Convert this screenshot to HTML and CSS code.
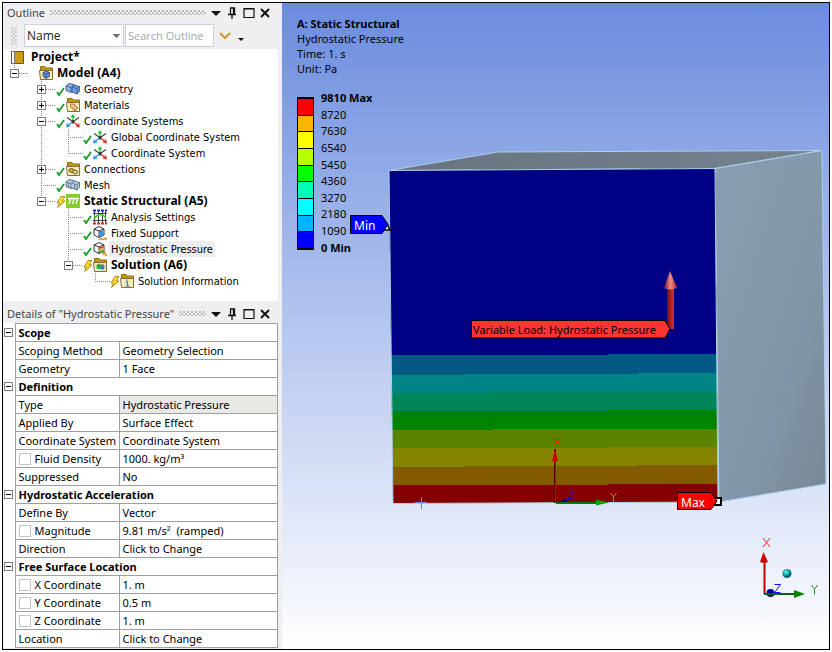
FILE: index.html
```html
<!DOCTYPE html>
<html lang="en">
<head>
<meta charset="utf-8">
<title>Static Structural - Hydrostatic Pressure</title>
<link rel="stylesheet" href="styles.css">
</head>
<body>
<svg class="sprite" aria-hidden="true">
  <symbol id="caret" viewBox="0 0 10 10"><path d="M0 3h10L5 8z" fill="#111"/></symbol>
  <symbol id="pin" viewBox="0 0 10 12"><path d="M3 1h4.500v6M3.500 1v6M1 7.500h8M5 8v4M6.500 1v6" stroke="#111" stroke-width="1.300" fill="none"/></symbol>
  <symbol id="max" viewBox="0 0 12 12"><path d="M1 1.500h10v9H1zM1 2h10" stroke="#111" stroke-width="1.200" fill="none"/></symbol>
  <symbol id="close" viewBox="0 0 10 10"><path d="M1 1l8 8M9 1l-8 8" stroke="#111" stroke-width="2" fill="none"/></symbol>
  <symbol id="check" viewBox="0 0 9 16"><path d="M1 11l2 3 5-7" stroke="#0a9a1a" stroke-width="1.700" fill="none"/></symbol>
  <symbol id="bolt" viewBox="0 0 9 16"><path d="M5 3.500h4L6 8h3L1.500 14.500 3.500 10H1z" fill="#ffdc28" stroke="#9a7400" stroke-width=".8"/></symbol>
  <symbol id="project" viewBox="0 0 16 16"><path d="M4.500 2.500h9v12h-9z" fill="#cc9c10" stroke="#6b5410"/><path d="M1.500 2.500h3v12h-3z" fill="#fff" stroke="#777"/><path d="M1.500 2v13" stroke="#444" stroke-dasharray="1 1"/></symbol>
  <symbol id="folder" viewBox="0 0 16 16"><path d="M2.500 5V1.500H7l1 1.500h6.500v3z" fill="#c79a16" stroke="#8a6a10"/><path d="M1.500 5.500h13v9h-12z" fill="#faeeb4" stroke="#806c38"/></symbol>
  <symbol id="model" viewBox="0 0 16 16"><use href="#folder"/><path d="M5 7.500L8 6l3.500 1.500v4L8 13.500 5 11.500z" fill="#5c91d8" stroke="#2d4770" stroke-width=".8"/><path d="M5 7.500l3 1.500 3.500-1.500M8 9v4" stroke="#2d4770" stroke-width=".7" fill="none"/></symbol>
  <symbol id="geometry" viewBox="0 0 16 16"><path d="M1 5l3-2.500 5 1V9l-3 2.500-5-2z" fill="#8fb4e8" stroke="#2c4c80" stroke-width=".8"/><path d="M1 5l5 1.500 3-3M6 6.500v5" stroke="#2c4c80" stroke-width=".7" fill="none"/><path d="M7 6l2.500-2 5 1.500v5L12 13l-5-2z" fill="#6c9fe4" stroke="#2c4c80" stroke-width=".8"/><path d="M7 6l5 1.500 2.500-2M12 7.500V13" stroke="#2c4c80" stroke-width=".7" fill="none"/></symbol>
  <symbol id="mesh" viewBox="0 0 16 16"><path d="M1 5l3-2.500 4 1 1.500.500 5 1.500v5L12 13l-5-2-1 .5-5-2z" fill="#b4cbe4" stroke="#42566e" stroke-width=".8"/><path d="M1 5l5 1.500 3-2.500M6 6.500v5M7 6l5 2 2.500-2.500M12 8v5M3.500 6v4M9.500 7v5" stroke="#42566e" stroke-width=".6" fill="none"/></symbol>
  <symbol id="materials" viewBox="0 0 16 16"><use href="#folder"/><path d="M5.500 7h3.500l4 4-3 3-4.500-4z" fill="#edb77e" stroke="#8f6032" stroke-width=".8"/><circle cx="7" cy="8.500" r=".7" fill="#fff"/></symbol>
  <symbol id="axes" viewBox="0 0 16 16"><path d="M2 4.500l5 3.500M14 4.500L9 8M8 7v4" stroke="#444" stroke-width="1.200"/><path d="M8 1l2.500 3.500h-5z" fill="#1fc52e"/><path d="M8 4v3.500" stroke="#1fc52e" stroke-width="1.300"/><path d="M1 14.500l1-4.500 3.500 3.500z" fill="#3292ec"/><path d="M15 14.500L14 10l-3.500 3.500z" fill="#e23030"/><path d="M3.500 12.500L7 9" stroke="#3292ec" stroke-width="1.300"/><path d="M12.500 12.500L9 9" stroke="#e23030" stroke-width="1.300"/><circle cx="8" cy="8.500" r="1.200" fill="#222"/></symbol>
  <symbol id="connections" viewBox="0 0 16 16"><use href="#folder"/><ellipse cx="6.500" cy="9.500" rx="2.500" ry="2" fill="#c8a93a" stroke="#705c20"/><ellipse cx="10" cy="11" rx="2.500" ry="2" fill="#e3cf80" stroke="#705c20"/></symbol>
  <symbol id="structural" viewBox="0 0 16 16"><path d="M1 1h14v14H1z" fill="#86cc2c"/><path d="M3 5.500h10.500M5.500 6L4 11M9 6l-1.500 5M12.500 6L11 11" stroke="#fff" stroke-width="1.300"/></symbol>
  <symbol id="settings" viewBox="0 0 16 16"><path d="M2.500 2v12M6.500 2v12M10.500 2v12M13.500 2v12M1 4.500h14M1 11.500h14" stroke="#333" stroke-width=".9"/><path d="M1 1.500h14" stroke="#2020ff" stroke-width="2" stroke-dasharray="3 1"/><path d="M1 14.500h14" stroke="#f02020" stroke-width="2" stroke-dasharray="3 1"/><path d="M2 10c3-5 8-6 12-1" stroke="#20d820" stroke-width="1.300" fill="none"/></symbol>
  <symbol id="cube" viewBox="0 0 16 16"><path d="M2 4l5-2.500L12 4v6l-5 2.500L2 10z" fill="#fff" stroke="#333"/><path d="M2 4l5 2 5-2M7 6v6.500" stroke="#333" fill="none"/></symbol>
  <symbol id="support" viewBox="0 0 16 16"><use href="#cube"/><path d="M7.500 6.300L11.500 5v5l-4 2z" fill="#2b92e8"/><path d="M7 15l3-2M10 15l3-2M13 15l2-2" stroke="#c58a10" stroke-width="1.300"/></symbol>
  <symbol id="pressure" viewBox="0 0 16 16"><use href="#cube"/><path d="M7.500 6.300l4-1.300v2l-4 1.300z" fill="#e34020"/><path d="M7.500 8.300l4-1.300v1.500l-4 1.500z" fill="#f0dd20"/><path d="M7.500 10l4-1.500V10l-4 2z" fill="#20b540"/><path d="M15 15l-4-4M11 13.500V11h2.500" stroke="#c58a10" stroke-width="1.400" fill="none"/></symbol>
  <symbol id="solution" viewBox="0 0 16 16"><use href="#folder"/><path d="M4.500 8L7 6.500 9 8v3l-2 1.500L4.500 11z" fill="#27a84a"/><path d="M8 8.500L10.500 7 12.500 8.500v3L10.500 13 8 11.500z" fill="#2a84c4"/><path d="M8 8.500L10.500 7l2 1.500-2 1z" fill="#e4622b"/></symbol>
  <symbol id="info" viewBox="0 0 16 16"><use href="#folder"/><path d="M8 6.500V8M6.500 9h2v4M6.500 13h4" stroke="#2b7be0" stroke-width="1.200" fill="none"/></symbol>
</svg>

<main class="window">
  <aside class="side">
    <section class="outline">
      <header class="title-bar">
        <h2>Outline</h2><span class="grip-line"></span>
        <button aria-label="Menu"><svg class="g10"><use href="#caret"/></svg></button>
        <button aria-label="Pin"><svg class="g12"><use href="#pin"/></svg></button>
        <button aria-label="Maximize"><svg class="g12"><use href="#max"/></svg></button>
        <button aria-label="Close"><svg class="g10"><use href="#close"/></svg></button>
      </header>
      <div class="toolbar">
        <span class="grip-block"></span>
        <select aria-label="Filter by"><option>Name</option></select>
        <input type="text" aria-label="Search Outline" placeholder="Search Outline">
        <button class="chev" aria-label="Expand"><svg viewBox="0 0 12 8"><path d="M1 1l5 5 5-5" fill="none" stroke="#cc9c2a" stroke-width="2"/></svg></button>
        <button class="more" aria-label="More"><svg viewBox="0 0 6 4"><path d="M0 0h6L3 3z" fill="#111"/></svg></button>
      </div>
      <div class="tree">
        <div class="project"><svg class="icon"><use href="#project"/></svg><b>Project*</b></div>
        <ul>
          <li><div class="row"><button class="box" aria-label="Collapse"></button><i class="dots"></i><i class="status"></i><svg class="icon"><use href="#model"/></svg><b class="label">Model (A4)</b></div>
            <ul>
              <li><div class="row"><button class="box plus" aria-label="Expand"></button><i class="dots"></i><svg class="status"><use href="#check"/></svg><svg class="icon"><use href="#geometry"/></svg><span class="label">Geometry</span></div></li>
              <li><div class="row"><button class="box plus" aria-label="Expand"></button><i class="dots"></i><svg class="status"><use href="#check"/></svg><svg class="icon"><use href="#materials"/></svg><span class="label">Materials</span></div></li>
              <li><div class="row"><button class="box" aria-label="Collapse"></button><i class="dots"></i><svg class="status"><use href="#check"/></svg><svg class="icon"><use href="#axes"/></svg><span class="label">Coordinate Systems</span></div>
                <ul>
                  <li><div class="row"><i class="dots leaf"></i><svg class="status"><use href="#check"/></svg><svg class="icon"><use href="#axes"/></svg><span class="label">Global Coordinate System</span></div></li>
                  <li><div class="row"><i class="dots leaf"></i><svg class="status"><use href="#check"/></svg><svg class="icon"><use href="#axes"/></svg><span class="label">Coordinate System</span></div></li>
                </ul>
              </li>
              <li><div class="row"><button class="box plus" aria-label="Expand"></button><i class="dots"></i><svg class="status"><use href="#check"/></svg><svg class="icon"><use href="#connections"/></svg><span class="label">Connections</span></div></li>
              <li><div class="row"><i class="dots leaf"></i><svg class="status"><use href="#check"/></svg><svg class="icon"><use href="#mesh"/></svg><span class="label">Mesh</span></div></li>
              <li><div class="row"><button class="box" aria-label="Collapse"></button><i class="dots"></i><svg class="status"><use href="#bolt"/></svg><svg class="icon"><use href="#structural"/></svg><b class="label">Static Structural (A5)</b></div>
                <ul>
                  <li><div class="row"><i class="dots leaf"></i><svg class="status"><use href="#check"/></svg><svg class="icon"><use href="#settings"/></svg><span class="label">Analysis Settings</span></div></li>
                  <li><div class="row"><i class="dots leaf"></i><svg class="status"><use href="#check"/></svg><svg class="icon"><use href="#support"/></svg><span class="label">Fixed Support</span></div></li>
                  <li><div class="row"><i class="dots leaf"></i><svg class="status"><use href="#check"/></svg><svg class="icon"><use href="#pressure"/></svg><span class="label selected">Hydrostatic Pressure</span></div></li>
                  <li><div class="row"><button class="box" aria-label="Collapse"></button><i class="dots"></i><svg class="status"><use href="#bolt"/></svg><svg class="icon"><use href="#solution"/></svg><b class="label">Solution (A6)</b></div>
                    <ul>
                      <li><div class="row"><i class="dots leaf"></i><svg class="status"><use href="#bolt"/></svg><svg class="icon"><use href="#info"/></svg><span class="label">Solution Information</span></div></li>
                    </ul>
                  </li>
                </ul>
              </li>
            </ul>
          </li>
        </ul>
      </div>
    </section>

    <section class="details">
      <header class="title-bar">
        <h2>Details of "Hydrostatic Pressure"</h2><span class="grip-line"></span>
        <button aria-label="Menu"><svg class="g10"><use href="#caret"/></svg></button>
        <button aria-label="Pin"><svg class="g12"><use href="#pin"/></svg></button>
        <button aria-label="Maximize"><svg class="g12"><use href="#max"/></svg></button>
        <button aria-label="Close"><svg class="g10"><use href="#close"/></svg></button>
      </header>
      <table>
        <colgroup><col class="c-box"><col class="c-name"><col></colgroup>
        <tbody>
          <tr><td><button class="box" aria-label="Collapse"></button></td><th colspan="2">Scope</th></tr>
          <tr><td></td><td>Scoping Method</td><td>Geometry Selection</td></tr>
          <tr><td></td><td>Geometry</td><td>1 Face</td></tr>
          <tr><td><button class="box" aria-label="Collapse"></button></td><th colspan="2">Definition</th></tr>
          <tr><td></td><td>Type</td><td class="readonly">Hydrostatic Pressure</td></tr>
          <tr><td></td><td>Applied By</td><td>Surface Effect</td></tr>
          <tr><td></td><td>Coordinate System</td><td>Coordinate System</td></tr>
          <tr><td></td><td><label><input type="checkbox">Fluid Density</label></td><td>1000. kg/m³</td></tr>
          <tr><td></td><td>Suppressed</td><td>No</td></tr>
          <tr><td><button class="box" aria-label="Collapse"></button></td><th colspan="2">Hydrostatic Acceleration</th></tr>
          <tr><td></td><td>Define By</td><td>Vector</td></tr>
          <tr><td></td><td><label><input type="checkbox">Magnitude</label></td><td>9.81 m/s²&nbsp; (ramped)</td></tr>
          <tr><td></td><td>Direction</td><td>Click to Change</td></tr>
          <tr><td><button class="box" aria-label="Collapse"></button></td><th colspan="2">Free Surface Location</th></tr>
          <tr><td></td><td><label><input type="checkbox">X Coordinate</label></td><td>1. m</td></tr>
          <tr><td></td><td><label><input type="checkbox">Y Coordinate</label></td><td>0.5 m</td></tr>
          <tr><td></td><td><label><input type="checkbox">Z Coordinate</label></td><td>1. m</td></tr>
          <tr><td></td><td>Location</td><td>Click to Change</td></tr>
        </tbody>
      </table>
    </section>
  </aside>

  <section class="viewer">
    <svg class="scene" viewBox="282 3 547 646" preserveAspectRatio="xMinYMin meet">
      <defs>
        <linearGradient id="sideFill" x1="0" y1="0" x2="1" y2="1"><stop offset="0" stop-color="#8a9db2"/><stop offset=".6" stop-color="#8397a9"/><stop offset="1" stop-color="#778894"/></linearGradient>
        <linearGradient id="topFill" x1="0" x2="1"><stop offset="0" stop-color="#67747f"/><stop offset="1" stop-color="#74838f"/></linearGradient>
        <linearGradient id="shaft" x1="0" x2="1"><stop offset="0" stop-color="#6d0c0c"/><stop offset=".5" stop-color="#b02020"/><stop offset="1" stop-color="#e03030"/></linearGradient>
        <linearGradient id="cone" x1="0" x2="1"><stop offset="0" stop-color="#8c1010"/><stop offset=".5" stop-color="#e88c8c"/><stop offset="1" stop-color="#c42020"/></linearGradient>
        <radialGradient id="ball" cx=".4" cy=".35"><stop offset="0" stop-color="#70f0f0"/><stop offset=".6" stop-color="#12a8b0"/><stop offset="1" stop-color="#086068"/></radialGradient>
        <clipPath id="front"><path d="M389 170.500L715 168.500 718 502 393 503.500z"/></clipPath>
      </defs>
      <path d="M389 170.500L498 152l324-1.500L715 168.500z" fill="url(#topFill)" stroke="#acd0ea"/>
      <path d="M715 168.500l107-18L826 484l-107 18z" fill="url(#sideFill)" stroke="#acd0ea"/>
      <g clip-path="url(#front)" shape-rendering="crispEdges">
        <path d="M380 160h345v350H380z" fill="#840000"/>
        <path d="M380 160h345V484L380 485.500z" fill="#845a00"/>
        <path d="M380 160h345V465L380 467z" fill="#848400"/>
        <path d="M380 160h345V447L380 448.500z" fill="#5a8400"/>
        <path d="M380 160h345V428.500L380 430z" fill="#008400"/>
        <path d="M380 160h345V410L380 411.500z" fill="#00845a"/>
        <path d="M380 160h345V391.500L380 393z" fill="#008484"/>
        <path d="M380 160h345V373L380 375z" fill="#005a84"/>
        <path d="M380 160h345V354L380 355.500z" fill="#000084"/>
      </g>
      <path d="M389 170.500L715 168.500 718 502 393 503.500z" fill="none" stroke="#acd0ea"/>
      <path d="M415 502.500h12M421.500 497v12" stroke="#6d86dc"/>
      <path d="M667 288h7v41h-7z" fill="url(#shaft)"/>
      <path d="M670 271l7 17q-7 3-13 0z" fill="url(#cone)"/>
      <path d="M471.500 320.500H665l5 8.500-5 9H471.500z" fill="#ff3434" stroke="#000"/>
      <text x="473" y="334">Variable Load: Hydrostatic Pressure</text>
      <path d="M386 222l4 8h-6" fill="#fff" stroke="#000" stroke-width="1.500"/>
      <path d="M350.500 215.500H382l6 9-6 9h-31.500z" fill="#0000ff" stroke="#000"/>
      <text class="light" x="354" y="230">Min</text>
      <path d="M555 503v-54" stroke="#5a0000" stroke-width="2"/><path d="M555.500 503v-42" stroke="#d00000"/>
      <path d="M555 449l3 12h-6z" fill="#d00000"/>
      <path d="M556 503h42" stroke="#087808" stroke-width="2"/><path d="M596 499.500l13 3-13 3z" fill="#08a008"/>
      <path d="M558 502l9-4v4z" fill="#000080"/>
      <path d="M554.500 437l6 8M560.500 437l-6 8" stroke="#ff1010"/>
      <path d="M568 491.500h5l-5 7.500h5" stroke="#0000ff" fill="none"/>
      <path d="M610.500 493l3 4 3-4M613.500 497v5" stroke="#10e010" fill="none"/>
      <path d="M715 498h6v7h-6z" fill="#fff" stroke="#000" stroke-width="2"/>
      <path d="M677.500 492.500H711l6 8.500-6 8.500h-33.500z" fill="#ff0000" stroke="#000"/>
      <text class="light" x="681" y="507">Max</text>
      <circle cx="770.500" cy="593" r="4" fill="#000090"/>
      <path d="M764.500 594v-34" stroke="#c00000" stroke-width="2"/><path d="M763.500 552l4.500 10q-4 2-8 0z" fill="#c80c0c"/>
      <path d="M764 594h32" stroke="#086008" stroke-width="2"/><path d="M794 590l11 4-11 4z" fill="#088008"/>
      <path d="M763 538l7 9M770 538l-7 9" stroke="#ee2020"/>
      <path d="M774.500 584.500h6l-6 8h6" stroke="#1010ff" fill="none"/>
      <path d="M811.500 585l3 4.500 3-4.500M814.500 589.500v5" stroke="#10a010" fill="none"/>
      <circle cx="787" cy="573.500" r="4.500" fill="url(#ball)"/>
    </svg>
    <div class="caption">
      <h1>A: Static Structural</h1>
      <p>Hydrostatic Pressure</p>
      <p>Time: 1. s</p>
      <p>Unit: Pa</p>
    </div>
    <div class="legend">
      <div class="bar"><i class="b1"></i><i class="b2"></i><i class="b3"></i><i class="b4"></i><i class="b5"></i><i class="b6"></i><i class="b7"></i><i class="b8"></i><i class="b9"></i></div>
      <ol><li><b>9810 Max</b></li><li>8720</li><li>7630</li><li>6540</li><li>5450</li><li>4360</li><li>3270</li><li>2180</li><li>1090</li><li><b>0 Min</b></li></ol>
    </div>
  </section>
</main>
</body>
</html>
```
FILE: styles.css
```css
* { box-sizing: border-box; }
body { margin: 0; padding: 2px; background: #fff; color: #000; font: 11px/16px "Noto Sans", "Open Sans", sans-serif; }
h1, h2, p, ul, ol { margin: 0; padding: 0; list-style: none; }
button { padding: 0; border: 0; background: none; font: inherit; color: inherit; }
svg { display: block; flex: none; }
.sprite { position: absolute; width: 0; height: 0; }

.window { display: grid; grid-template-columns: 279px 1fr; min-height: calc(100vh - 4px); border: 1px solid #000; }
.side { display: flex; flex-direction: column; padding: 0 4px 1px 0; background: #efeff2; }
.outline { flex: 1; display: flex; flex-direction: column; }

.title-bar { display: flex; align-items: center; gap: 5px; height: 19px; padding: 0 8px 0 4px; color: #444; }
.title-bar h2 { font: 11px/18px "Noto Sans", sans-serif; white-space: nowrap; }
.grip-line { flex: 1; height: 5px; background: radial-gradient(circle at 1px 1px, #bbb 0 1px, transparent 1px) 0 0 / 4px 4px, radial-gradient(circle at 1px 1px, #bbb 0 1px, transparent 1px) 2px 2px / 4px 4px; }
.g10 { width: 10px; height: 10px; }
.g12 { width: 12px; height: 12px; }

.toolbar { display: flex; align-items: center; gap: 1px; height: 27px; padding: 0 8px 0 8px; }
.grip-block { width: 6px; height: 18px; margin-right: 6px; background: radial-gradient(circle at 1px 1px, #ccc 0 1px, transparent 1px) 0 0 / 4px 4px, radial-gradient(circle at 1px 1px, #ccc 0 1px, transparent 1px) 2px 2px / 4px 4px; }
select, input[type="text"] { height: 23px; margin: 0; border: 1px solid #cfd0dc; border-radius: 0; font: 12px/18px "Open Sans", sans-serif; }
select { width: 100px; padding: 0 2px; appearance: none; background: linear-gradient(to bottom right, #717171 50%, transparent 50%) 92px 9px / 4px 4px no-repeat, linear-gradient(to bottom left, #717171 50%, transparent 50%) 88px 9px / 4px 4px no-repeat, #fff; color: #222; }
input[type="text"] { width: 89px; padding: 0 2px; background: #fff; font-size: 11px; }
input::placeholder { color: #a0a8a8; opacity: 1; }
.chev { width: 12px; margin-left: 4px; }
.more { width: 6px; margin: 9px 0 0 6px; }

.tree { flex: 1; padding: 0 0 8px 7px; background: #fff; font-family: "DejaVu Sans Condensed", "DejaVu Sans", sans-serif; white-space: nowrap; }
.project { display: flex; gap: 5px; }
.tree b { font: bold 12px/16px "Noto Sans", sans-serif; }
.tree ul ul { margin-left: 27px; }
.tree li { background: repeating-linear-gradient(#888 0 1px, transparent 1px 2px) 4px 0 / 1px 100% no-repeat; }
.tree li:last-child { background-size: 1px 8px; }
.row { display: flex; align-items: center; height: 16px; }
.icon { width: 16px; height: 16px; }
.box { display: block; flex: none; width: 9px; height: 9px; border: 1px solid #808080; background: linear-gradient(#000, #000) 1px 3px / 5px 1px no-repeat, #fff; }
.plus { background: linear-gradient(#000, #000) 1px 3px / 5px 1px no-repeat, linear-gradient(#000, #000) 3px 1px / 1px 5px no-repeat, #fff; }
.dots { flex: none; width: 10px; height: 1px; background: repeating-linear-gradient(90deg, #888 0 1px, transparent 1px 2px); }
.leaf { width: 15px; margin-left: 4px; }
.status { flex: none; width: 9px; height: 16px; }
.label { margin-left: 1px; padding: 0 2px; }
span.label { padding-top: 2px; line-height: 14px; }
.selected { background: #ededed; }

.details .title-bar { margin-top: 3px; }
table { width: 100%; border-collapse: collapse; table-layout: fixed; background: #fff; line-height: 16px; }
.c-box { width: 12px; }
.c-name { width: 104px; }
tr { height: 18px; }
td, th { padding: 0 3px; border: 1px solid #a0a0a0; text-align: left; white-space: nowrap; line-height: 16px; }
td:first-child { padding: 0 0 0 1px; border-width: 0 1px 0 0; }
.readonly { background: #e8e8e4; }
label { display: flex; align-items: center; gap: 4px; }
input[type="checkbox"] { appearance: none; width: 12px; height: 12px; margin: 0; border: 1px solid #c4c4c4; background: #fff; }

.viewer { position: relative; padding: 13px 15px; background: linear-gradient(#6b8cde, #fff); }
.scene { position: absolute; inset: 0; width: 100%; height: 100%; }
.scene text { font: 11px "Noto Sans", sans-serif; }
.scene .light { font-size: 12px; fill: #fff; }
.caption, .legend { position: relative; }
.caption h1, .caption p { font-size: 11px; line-height: 15px; }
.legend { display: flex; align-items: flex-start; gap: 7px; margin-top: 14px; }
.bar { display: flex; flex-direction: column; gap: 1px; width: 17px; height: 153px; margin-top: 7px; padding: 2px 1px; background: #000; }
.bar i { flex: 1; }
.legend ol { display: grid; grid-auto-rows: 1fr; height: 166px; }
.legend li { display: flex; align-items: center; line-height: 16px; }
.b1 { background: #f00; } .b2 { background: #ffb400; } .b3 { background: #ff0; }
.b4 { background: #b4ff00; } .b5 { background: #0f0; } .b6 { background: #00ffb4; }
.b7 { background: #0ff; } .b8 { background: #00b4ff; } .b9 { background: #00f; }
```
